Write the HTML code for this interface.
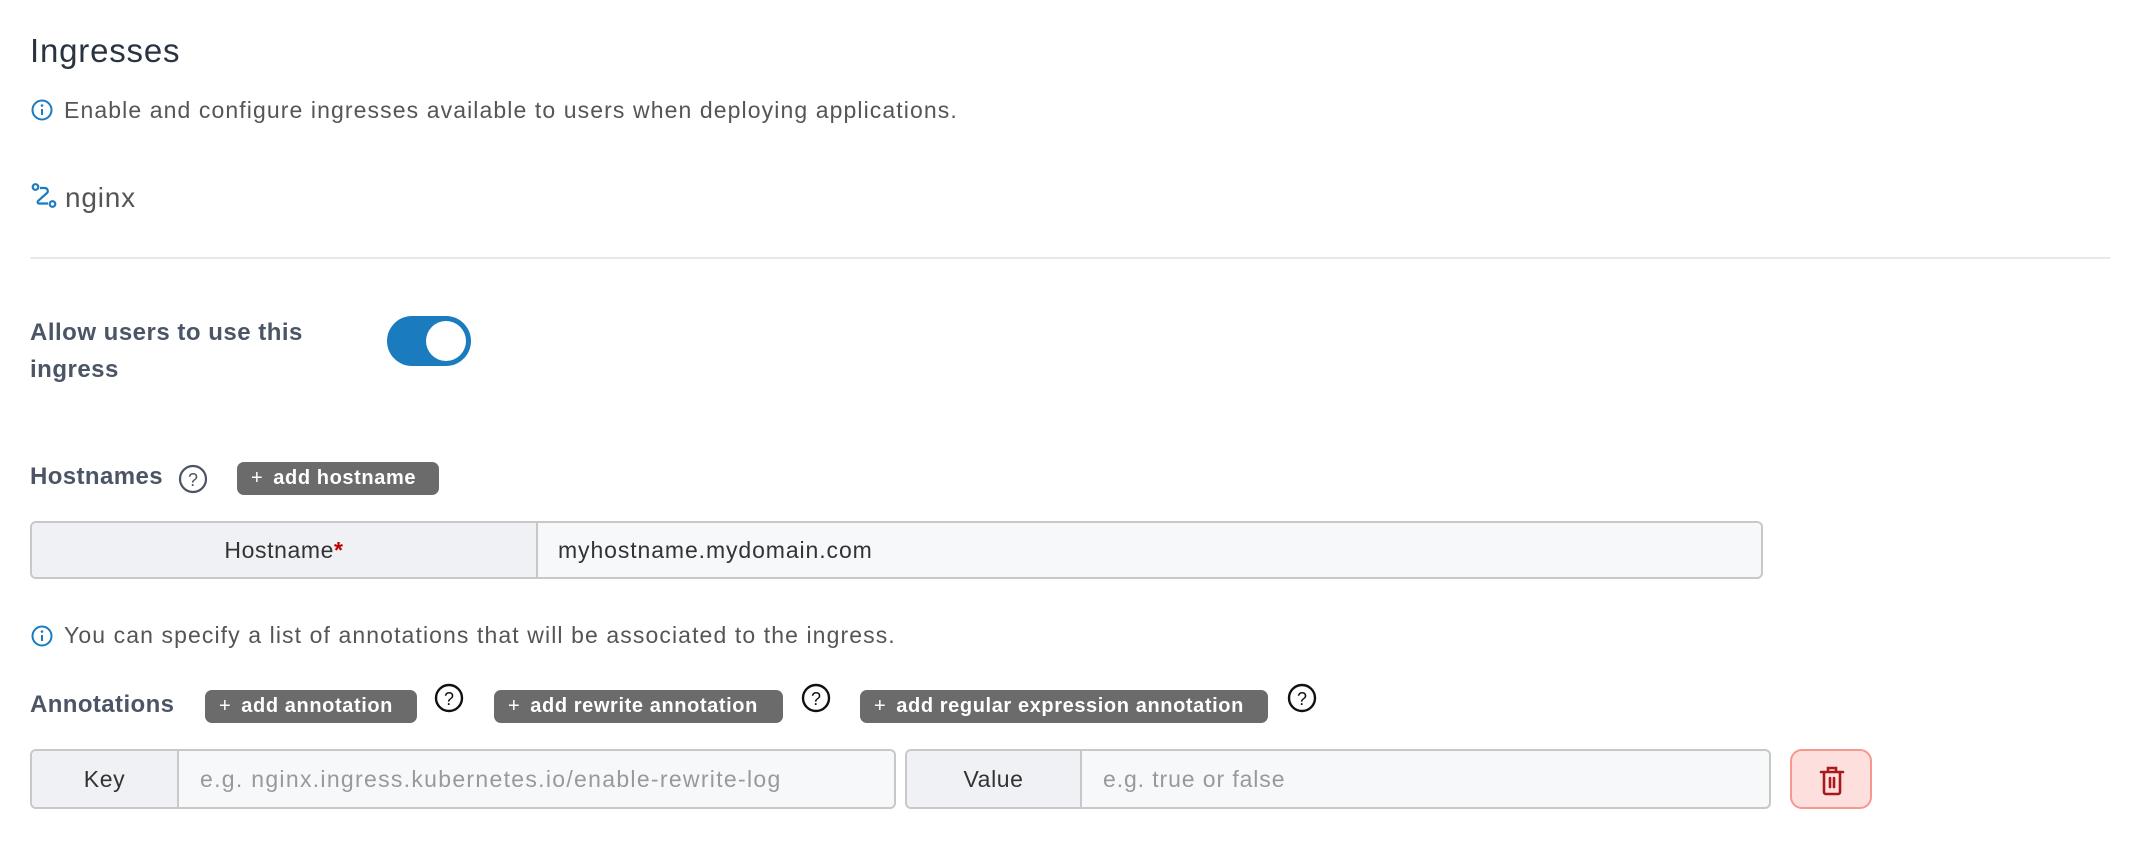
<!DOCTYPE html>
<html><head><meta charset="utf-8"><style>
*{box-sizing:border-box;margin:0;padding:0}
body{width:2138px;height:854px;background:#fff;font-family:"Liberation Sans",sans-serif;position:relative;overflow:hidden;color:#333}
.a{position:absolute;white-space:nowrap}
.btn{position:absolute;height:33px;background:#6b6b6b;color:#fff;border-radius:7px;font-weight:bold;font-size:20px;line-height:33px;padding-left:14px;letter-spacing:0.6px}
.btn span{font-weight:normal;margin-right:10px}
.grp{position:absolute;border:2px solid #c8c8c8;border-radius:6px;background:#f7f8fa;overflow:hidden}
.add{position:absolute;left:0;top:0;bottom:0;background:#f0f1f5;border-right:2px solid #c8c8c8;text-align:center;font-size:23px;color:#333;letter-spacing:0.6px}
.q{position:absolute}
.in{letter-spacing:0.9px}
</style></head><body>
<div class="a" style="left:30px;top:32px;font-size:33px;color:#2a3340;letter-spacing:0.8px">Ingresses</div>
<svg class="a" style="left:31px;top:99px" width="22" height="22" viewBox="0 0 22 22"><circle cx="11" cy="11" r="9.5" fill="none" stroke="#1a7bc1" stroke-width="2"/><line x1="11" y1="10" x2="11" y2="16" stroke="#1a7bc1" stroke-width="2"/><circle cx="11" cy="6.5" r="1.3" fill="#1a7bc1"/></svg>
<div class="a" style="left:64px;top:97px;font-size:23px;color:#555;letter-spacing:1.1px">Enable and configure ingresses available to users when deploying applications.</div>
<svg class="a" style="left:31px;top:183px" width="26" height="26" viewBox="0 0 26 26" fill="none" stroke="#1a7bc1" stroke-width="2.2"><circle cx="4.5" cy="4" r="2.8"/><circle cx="21.5" cy="21" r="2.8"/><path d="M9 5h5a3 3 0 0 1 2 5l-9 8a1.5 1.5 0 0 0 1 2.5h9"/></svg>
<div class="a" style="left:65px;top:182px;font-size:28px;color:#555;letter-spacing:0.8px">nginx</div>
<div class="a" style="left:30px;top:257px;width:2080px;height:2px;background:#e8e8e8"></div>
<div class="a" style="left:30px;top:314px;font-size:24px;line-height:37px;color:#4b5565;font-weight:bold;letter-spacing:0.5px">Allow users to use this<br>ingress</div>
<div class="a" style="left:387px;top:316px;width:84px;height:50px;border-radius:25px;background:#1b7bbf"><div style="position:absolute;right:5px;top:5px;width:40px;height:40px;border-radius:50%;background:#fff"></div></div>
<div class="a" style="left:30px;top:463px;font-size:24px;color:#4b5565;font-weight:bold;letter-spacing:0.4px">Hostnames</div>
<svg class="q" style="left:178px;top:464px" width="30" height="30" viewBox="0 0 30 30"><circle cx="15" cy="15" r="13" fill="none" stroke="#4b5565" stroke-width="2.2"/><text x="15" y="22" text-anchor="middle" font-size="18" fill="#4b5565" font-family="Liberation Sans">?</text></svg>
<div class="btn" style="left:237px;top:462px;width:202px"><span>+</span>add hostname</div>
<div class="grp" style="left:30px;top:521px;width:1733px;height:58px"><div class="add" style="width:506px;line-height:54px">Hostname<b style="color:#b00">*</b></div><div class="a in" style="left:526px;top:0;line-height:54px;font-size:23px;color:#333">myhostname.mydomain.com</div></div>
<svg class="a" style="left:31px;top:625px" width="22" height="22" viewBox="0 0 22 22"><circle cx="11" cy="11" r="9.5" fill="none" stroke="#1a7bc1" stroke-width="2"/><line x1="11" y1="10" x2="11" y2="16" stroke="#1a7bc1" stroke-width="2"/><circle cx="11" cy="6.5" r="1.3" fill="#1a7bc1"/></svg>
<div class="a" style="left:64px;top:622px;font-size:23px;color:#555;letter-spacing:1.1px">You can specify a list of annotations that will be associated to the ingress.</div>
<div class="a" style="left:30px;top:691px;font-size:24px;color:#4b5565;font-weight:bold;letter-spacing:0.4px">Annotations</div>
<div class="btn" style="left:205px;top:690px;width:212px"><span>+</span>add annotation</div>
<svg class="q" style="left:434px;top:683px" width="30" height="30" viewBox="0 0 30 30"><circle cx="15" cy="15" r="13" fill="none" stroke="#111" stroke-width="2.4"/><text x="15" y="22" text-anchor="middle" font-size="18" fill="#111" font-family="Liberation Sans">?</text></svg>
<div class="btn" style="left:494px;top:690px;width:289px"><span>+</span>add rewrite annotation</div>
<svg class="q" style="left:801px;top:683px" width="30" height="30" viewBox="0 0 30 30"><circle cx="15" cy="15" r="13" fill="none" stroke="#111" stroke-width="2.4"/><text x="15" y="22" text-anchor="middle" font-size="18" fill="#111" font-family="Liberation Sans">?</text></svg>
<div class="btn" style="left:860px;top:690px;width:408px"><span>+</span>add regular expression annotation</div>
<svg class="q" style="left:1287px;top:683px" width="30" height="30" viewBox="0 0 30 30"><circle cx="15" cy="15" r="13" fill="none" stroke="#111" stroke-width="2.4"/><text x="15" y="22" text-anchor="middle" font-size="18" fill="#111" font-family="Liberation Sans">?</text></svg>
<div class="grp" style="left:30px;top:749px;width:866px;height:60px"><div class="add" style="width:147px;line-height:56px">Key</div><div class="a in" style="left:168px;top:0;line-height:56px;font-size:23px;color:#999;letter-spacing:1.3px">e.g. nginx.ingress.kubernetes.io/enable-rewrite-log</div></div>
<div class="grp" style="left:905px;top:749px;width:866px;height:60px"><div class="add" style="width:175px;line-height:56px">Value</div><div class="a in" style="left:196px;top:0;line-height:56px;font-size:23px;color:#999">e.g. true or false</div></div>
<div class="a" style="left:1790px;top:749px;width:82px;height:60px;border:2px solid #f59890;border-radius:12px;background:#fde0de">
<svg style="position:absolute;left:27px;top:15px" width="26" height="30" viewBox="0 0 26 30" fill="none" stroke="#a8191c" stroke-width="2.6" stroke-linecap="round"><path d="M2 6h22M9 6V2h8v4M5 6v20a2 2 0 0 0 2 2h12a2 2 0 0 0 2-2V6M11 12v9M15 12v9"/></svg></div>
</body></html>
